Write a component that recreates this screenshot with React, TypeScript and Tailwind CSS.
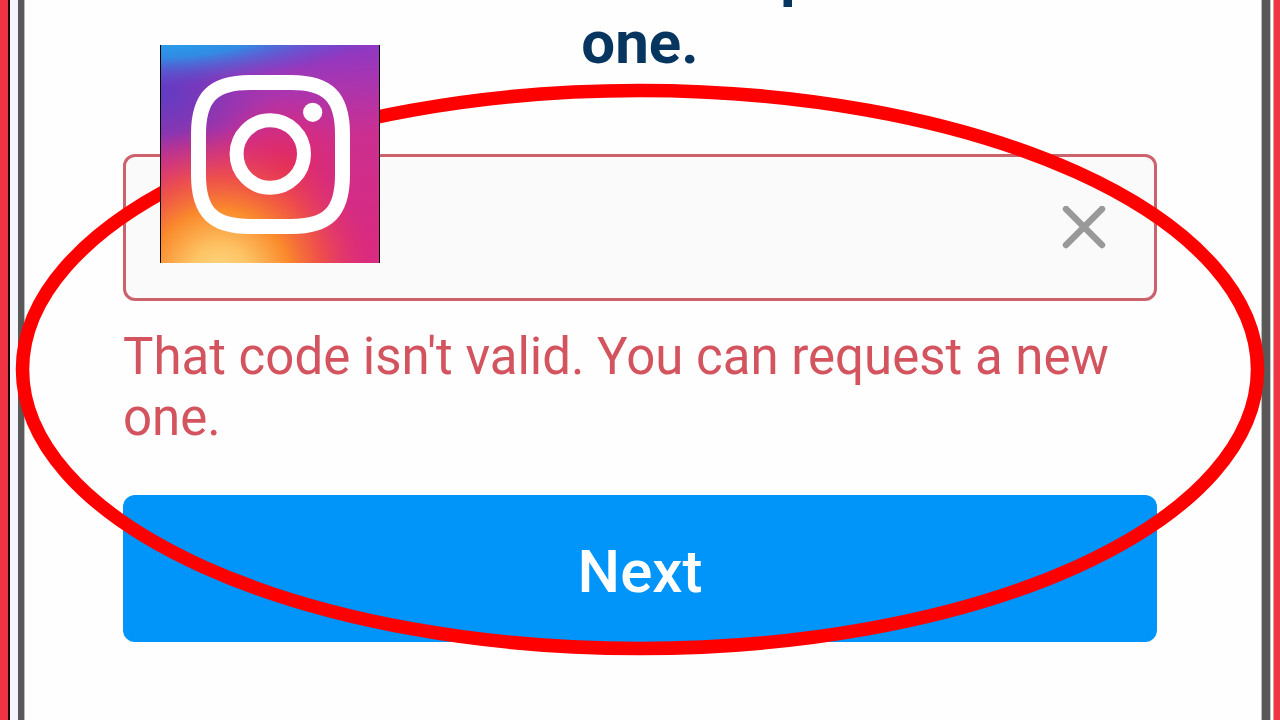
import React, { useState } from "react";

const InstagramLogo: React.FC = () => {
  return (
    <svg
      viewBox="0 0 220 218"
      className="absolute left-[160px] top-[45px] w-[220px] h-[218px]"
      role="img"
      aria-label="Instagram"
    >
      <defs>
        <linearGradient id="base" x1="0" y1="0" x2="0.1" y2="1">
          <stop offset="0" stopColor="#7d3bd0" />
          <stop offset="0.25" stopColor="#a835b0" />
          <stop offset="0.5" stopColor="#cb2f90" />
          <stop offset="1" stopColor="#d92b80" />
        </linearGradient>
        <radialGradient
          id="violet"
          gradientUnits="userSpaceOnUse"
          cx="0"
          cy="0"
          r="1"
          gradientTransform="translate(0 48) scale(120 90)"
        >
          <stop offset="0" stopColor="#5f3cc4" />
          <stop offset="0.4" stopColor="#7038bb" stopOpacity="0.75" />
          <stop offset="1" stopColor="#9a35b0" stopOpacity="0" />
        </radialGradient>
        <radialGradient
          id="sky"
          gradientUnits="userSpaceOnUse"
          cx="0"
          cy="0"
          r="1"
          gradientTransform="translate(20 -8) rotate(-4) scale(210 50)"
        >
          <stop offset="0" stopColor="#1fa6f0" />
          <stop offset="0.4" stopColor="#2b93e6" stopOpacity="0.9" />
          <stop offset="1" stopColor="#5a4fd0" stopOpacity="0" />
        </radialGradient>
        <radialGradient
          id="pink"
          gradientUnits="userSpaceOnUse"
          cx="125"
          cy="125"
          r="75"
        >
          <stop offset="0" stopColor="#e6294f" stopOpacity="0.9" />
          <stop offset="1" stopColor="#e0297a" stopOpacity="0" />
        </radialGradient>
        <radialGradient
          id="warm"
          gradientUnits="userSpaceOnUse"
          cx="0"
          cy="0"
          r="1"
          gradientTransform="translate(60 232) scale(155 150)"
        >
          <stop offset="0" stopColor="#ffdc85" />
          <stop offset="0.2" stopColor="#fdc465" />
          <stop offset="0.45" stopColor="#fa8a2c" />
          <stop offset="0.66" stopColor="#f4593c" stopOpacity="0.8" />
          <stop offset="1" stopColor="#e22d6a" stopOpacity="0" />
        </radialGradient>
      </defs>
      <rect width="220" height="218" fill="#000000" />
      <rect x="1" width="218" height="218" fill="url(#base)" />
      <rect x="1" width="218" height="218" fill="url(#violet)" />
      <rect x="1" width="218" height="218" fill="url(#sky)" />
      <rect x="1" width="218" height="218" fill="url(#pink)" />
      <rect x="1" width="218" height="218" fill="url(#warm)" />
      <g fill="none" stroke="#ffffff">
        <path
          strokeWidth="15"
          d="M90 37.5H131C168 37.5 182.5 52 182.5 89V130C182.5 167 168 181.5 131 181.5H90C53 181.5 38.5 167 38.5 130V89C38.5 52 53 37.5 90 37.5Z"
        />
        <circle cx="110.3" cy="109" r="33.7" strokeWidth="14" />
      </g>
      <circle cx="152.7" cy="67.3" r="9.6" fill="#ffffff" />
    </svg>
  );
};

const App: React.FC = () => {
  const [code, setCode] = useState("");

  return (
    <div className="relative flex min-h-screen w-full overflow-hidden bg-[#fefefe] font-['Roboto',sans-serif]">
      {/* Left frame */}
      <div className="flex shrink-0">
        <div className="w-2 bg-[#ee3342]" />
        <div className="w-[2px] bg-[#1a0508]" />
        <div className="w-2 bg-[#f5f7ff]" />
        <div className="w-[6px] bg-[#595959]" />
        <div className="w-px bg-[#b9bbb9]" />
      </div>

      {/* Form */}
      <main className="flex-1 min-w-0 pl-[98px] pr-[104px]">
        <h1 className="-mt-[127px] text-center text-[60px] leading-[68px] font-bold text-[#06355f]">
          That code
          <br />
          isn't valid. You can request a new
          <br />
          one.
        </h1>

        <form onSubmit={(e) => e.preventDefault()}>
          <div className="mt-[77px] flex h-[147px] items-center rounded-xl border-[3px] border-[#cb626c] bg-[#fafafa] pr-12">
            <input
              type="text"
              aria-label="Confirmation code"
              value={code}
              onChange={(e) => setCode(e.target.value)}
              className="h-full min-w-0 flex-1 bg-transparent px-10 text-[51px] outline-none"
            />
            <button type="button" aria-label="Clear" onClick={() => setCode("")}>
              <svg
                viewBox="0 0 44 44"
                className="h-11 w-11"
                fill="none"
                stroke="#999999"
                strokeWidth="6.5"
                strokeLinecap="round"
              >
                <path d="M4 3L40 39M40 3L4 39" />
              </svg>
            </button>
          </div>

          <p className="mt-[25px] text-[51px] leading-[61px] text-[#d3545f]">
            That code isn't valid. You can request a new one.
          </p>

          <button
            type="submit"
            className="mt-[47px] h-[147px] w-full rounded-xl bg-[#0195fa] pt-[6px] text-[60px] font-medium text-white"
          >
            Next
          </button>
        </form>
      </main>

      {/* Right frame */}
      <div className="flex shrink-0">
        <div className="w-px bg-[#b9b9b9]" />
        <div className="w-2 bg-[#595959]" />
        <div className="w-px bg-[#c4c4c4]" />
        <div className="w-[2px] bg-white" />
        <div className="w-px bg-[#e79aa2]" />
        <div className="w-[6px] bg-[#ee3342]" />
      </div>

      {/* Red circle over the form */}
      <svg
        viewBox="0 0 1280 720"
        className="pointer-events-none absolute left-0 top-0 w-full"
        aria-hidden="true"
      >
        <ellipse
          cx="640"
          cy="369.5"
          rx="617.5"
          ry="279"
          fill="none"
          stroke="#ff0000"
          strokeWidth="13.5"
        />
      </svg>

      <InstagramLogo />
    </div>
  );
};

export default App;
